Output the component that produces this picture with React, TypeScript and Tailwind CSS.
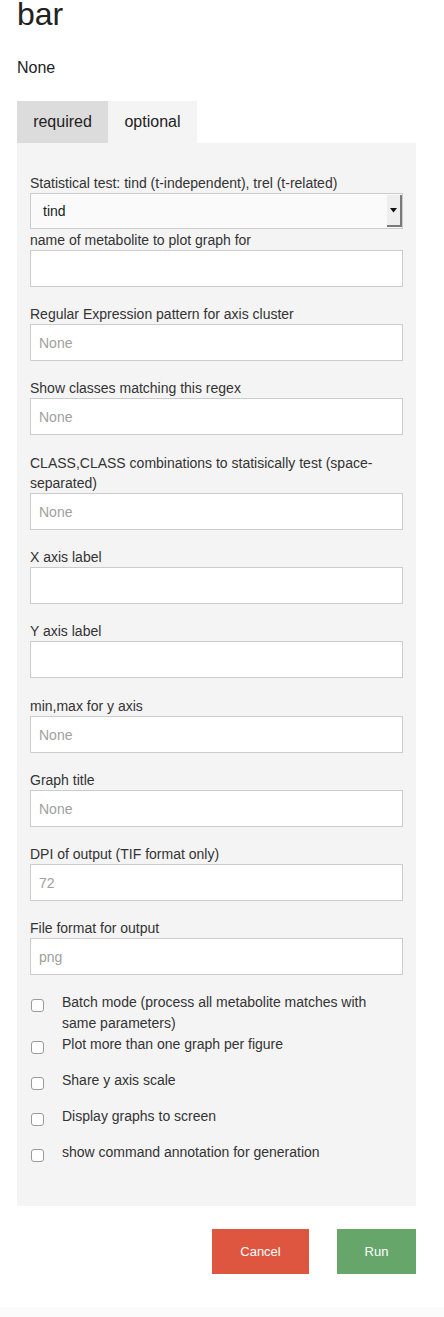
import React from 'react';

const TextField = ({ label, placeholder = '', gap = 'mb-[17px]' }: { label: string; placeholder?: string; gap?: string }) => (
  <div className={gap}>
    <label className="block text-[14px] leading-[20px] text-[#333]">{label}</label>
    <input
      type="text"
      placeholder={placeholder}
      className="block w-full h-[37px] bg-white border border-[#cccccc] px-[8px] text-[14px] text-[#333] placeholder:text-[#a0a0a0] outline-none"
    />
  </div>
);

const CheckRow = ({ label }: { label: string }) => (
  <div className="flex items-start min-h-[36px]">
    <span className="mt-[7px] ml-[1px] w-[13px] h-[13px] shrink-0 rounded-[3px] border border-[#9a9a9a] bg-white" />
    <span className="ml-[18px] text-[14px] leading-[21px] text-[#333]">{label}</span>
  </div>
);

export default function App() {
  return (
    <div className="min-h-[1317px] bg-white font-['Liberation_Sans',Arial,sans-serif] text-[#222] overflow-hidden">
      <div className="px-[17px] w-[416px] box-content">
        <h1 className="text-[32px] leading-[28px] text-[#222]">bar</h1>
        <p className="mt-[29px] text-[16px] leading-[22px] text-[#222]">None</p>

        {/* tabs */}
        <div className="mt-[22px] flex">
          <div className="w-[91px] h-[42px] flex items-center justify-center bg-[#dcdcdc] text-[16px] text-[#222]">
            required
          </div>
          <div className="w-[89px] h-[42px] flex items-center justify-center bg-[#f4f4f4] text-[16px] text-[#222]">
            optional
          </div>
        </div>

        {/* panel */}
        <div className="w-[399px] bg-[#f4f4f4] pt-[30px] pb-[28px] px-[13px]">
          <label className="block text-[14px] leading-[20px] text-[#333]">
            Statistical test: tind (t-independent), trel (t-related)
          </label>
          <div className="mb-[1px] h-[36px] flex items-stretch border border-[#cccccc] bg-[#fafafa]">
            <span className="flex-1 flex items-center pl-[12px] text-[14px] text-[#222]">tind</span>
            <span className="w-[15px] my-[1px] flex items-center justify-center bg-[#eeeeee] border-r-2 border-b-2 border-[#7a7a7a]">
              <svg width="7" height="5" viewBox="0 0 7 5">
                <path d="M0 0 H7 L3.5 4.5 Z" fill="#111" />
              </svg>
            </span>
          </div>

          <TextField label="name of metabolite to plot graph for" />
          <TextField label="Regular Expression pattern for axis cluster" placeholder="None" />
          <TextField label="Show classes matching this regex" placeholder="None" gap="mb-[18px]" />
          <TextField label="CLASS,CLASS combinations to statisically test (space-separated)" placeholder="None" />
          <TextField label="X axis label" />
          <TextField label="Y axis label" gap="mb-[18px]" />
          <TextField label="min,max for y axis" placeholder="None" />
          <TextField label="Graph title" placeholder="None" />
          <TextField label="DPI of output (TIF format only)" placeholder="72" />
          <TextField label="File format for output" placeholder="png" />

          <CheckRow label="Batch mode (process all metabolite matches with same parameters)" />
          <CheckRow label="Plot more than one graph per figure" />
          <CheckRow label="Share y axis scale" />
          <CheckRow label="Display graphs to screen" />
          <CheckRow label="show command annotation for generation" />
        </div>

        {/* actions */}
        <div className="mt-[23px] w-[399px] flex justify-end gap-[28px]">
          <button className="w-[97px] h-[45px] bg-[#de5540] text-white text-[13px]">Cancel</button>
          <button className="w-[79px] h-[45px] bg-[#66a66a] text-white text-[13px]">Run</button>
        </div>
      </div>
      <div className="mt-[33px] h-[20px] bg-[#fbfbfb]" />
    </div>
  );
}
